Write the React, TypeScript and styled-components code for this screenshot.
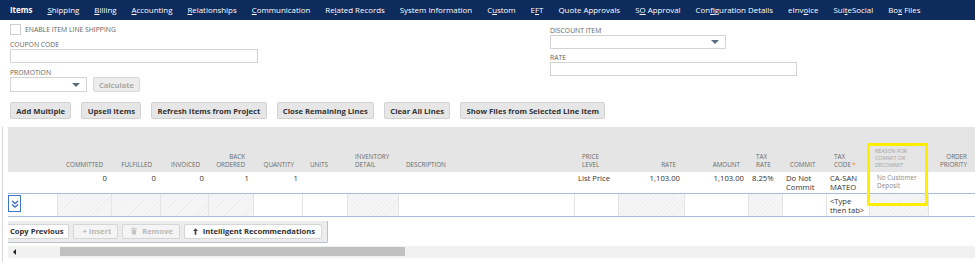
import styled, { createGlobalStyle } from 'styled-components';

const GlobalStyle = createGlobalStyle`
  html, body {
    margin: 0;
    padding: 0;
    background: #fff;
  }
  body {
    font-family: "Open Sans", "Liberation Sans", sans-serif;
    color: #333;
    width: 975px;
    overflow: hidden;
  }
`;

// top tabs
const TabBar = styled.div`
  height: 20px;
  background: #0d2b5c;
  display: flex;
  align-items: center;
  gap: 15px;
  padding-left: 10px;
`;

const Tab = styled.span<{ $active?: boolean }>`
  color: #fff;
  font-size: 7.9px;
  font-weight: ${p => (p.$active ? 700 : 400)};
  white-space: nowrap;
  u {
    text-decoration-thickness: 0.5px;
  }
`;

// form
const FormGrid = styled.div`
  display: grid;
  grid-template-columns: 540px 1fr;
  padding: 4px 0 0 10px;
`;

const FormCol = styled.div`
  display: flex;
  flex-direction: column;
`;

const CheckRow = styled.label`
  display: flex;
  align-items: center;
  gap: 4px;
  height: 10px;
`;

const CheckBox = styled.span`
  width: 9px;
  height: 9px;
  border: 1px solid #cfcfcf;
  background: #fff;
`;

const FieldLabel = styled.div<{ $gap?: number }>`
  font-size: 6.8px;
  line-height: 9px;
  color: #666;
  text-transform: uppercase;
  margin-top: ${p => p.$gap ?? 6}px;
  white-space: nowrap;
`;

const TextInput = styled.div<{ $w: number }>`
  width: ${p => p.$w}px;
  height: 14px;
  box-sizing: border-box;
  border: 1px solid #d3d3d3;
  background: #fff;
`;

const Select = styled.div<{ $w: number; $h?: number }>`
  width: ${p => p.$w}px;
  height: ${p => p.$h ?? 14}px;
  box-sizing: border-box;
  border: 1px solid #d3d3d3;
  background: #fff;
  display: flex;
  align-items: center;
  justify-content: flex-end;
  padding-right: 6px;
`;

const Caret = styled.span`
  width: 0;
  height: 0;
  border-left: 4px solid transparent;
  border-right: 4px solid transparent;
  border-top: 4px solid #5b6b80;
`;

const InlineRow = styled.div`
  display: flex;
  align-items: center;
  gap: 6px;
`;

const DisabledButton = styled.div`
  height: 15px;
  box-sizing: border-box;
  padding: 0 5px;
  display: flex;
  align-items: center;
  background: #ececec;
  border: 1px solid #d8d8d8;
  border-radius: 2px;
  color: #a8a8a8;
  font-size: 7.5px;
  font-weight: 700;
`;

// action buttons
const ActionRow = styled.div`
  display: flex;
  gap: 10px;
  padding-left: 10px;
  margin-top: 10px;
`;

const ActionButton = styled.div`
  height: 17px;
  box-sizing: border-box;
  padding: 0 5.3px;
  display: flex;
  align-items: center;
  background: #e6e6e6;
  border: 1px solid #d2d2d2;
  border-radius: 2px;
  color: #333;
  font-size: 7.65px;
  font-weight: 700;
  white-space: nowrap;
`;

// sublist
const Section = styled.div`
  margin: 8px 0 0 2px;
  border-left: 1px solid #d6d6d6;
  border-bottom: 1px solid #d6d6d6;
  padding: 0 0 4px 5px;
`;

const TableWrap = styled.div`
  position: relative;
  overflow: hidden;
`;

const Grid = styled.div<{ $cols: string }>`
  display: grid;
  grid-template-columns: ${p => p.$cols};
`;

const HeadCell = styled.div<{ $align: string; $faint?: boolean }>`
  height: 45px;
  box-sizing: border-box;
  background: #e5e5e5;
  display: flex;
  flex-direction: column;
  justify-content: flex-end;
  align-items: ${p => (p.$align === 'right' ? 'flex-end' : 'flex-start')};
  text-align: ${p => p.$align};
  padding: 0 ${p => (p.$faint ? 6 : 8)}px 3px;
  font-size: ${p => (p.$faint ? 5.3 : 6.3)}px;
  line-height: ${p => (p.$faint ? 7 : 8)}px;
  color: ${p => (p.$faint ? '#a3a3a3' : '#6a6a6a')};
  text-transform: uppercase;
  white-space: nowrap;
`;

const Req = styled.span`
  color: #e8962c;
  font-size: 7px;
  margin-left: 1px;
`;

const Cell = styled.div<{ $align: string; $faint?: boolean }>`
  height: 21px;
  box-sizing: border-box;
  padding: 2px 4px 0;
  text-align: ${p => p.$align};
  font-size: ${p => (p.$faint ? 6.4 : 7.7)}px;
  line-height: ${p => (p.$faint ? 8 : 9)}px;
  color: ${p => (p.$faint ? '#8a8a8a' : '#333')};
  padding-left: ${p => (p.$faint ? 8 : 4)}px;
`;

const EditRow = styled.div<{ $cols: string }>`
  display: grid;
  grid-template-columns: ${p => p.$cols};
  border-top: 1px solid #a9bbd8;
  border-bottom: 1px solid #a9bbd8;
  height: 24px;
  box-sizing: border-box;
`;

const EditCell = styled.div<{ $hatched?: boolean }>`
  border-left: 1px solid #e4e4e4;
  background: ${p =>
    p.$hatched
      ? 'repeating-linear-gradient(135deg, #f6f6f6 0 2px, #efefef 2px 3px)'
      : '#fff'};
  padding: 3px 3px 0;
  font-size: 7.6px;
  line-height: 9px;
  color: #333;
`;

const FirstEditCell = styled.div`
  display: flex;
  align-items: flex-start;
  padding-top: 1px;
  background: #fff;
`;

const ExpandBox = styled.div`
  width: 13px;
  height: 17px;
  box-sizing: border-box;
  border: 1px solid #3f74c9;
  display: flex;
  align-items: center;
  justify-content: center;
  background: #fff;
`;

const Highlight = styled.div`
  position: absolute;
  left: 859px;
  top: 16px;
  width: 61px;
  height: 63px;
  box-sizing: border-box;
  border: 3px solid #ffee00;
  pointer-events: none;
`;

const ButtonBar = styled.div`
  display: inline-flex;
  gap: 4px;
  padding: 3px 5px 3px 0;
  background: #ececec;
  border-right: 1px solid #b9c1cf;
  border-bottom: 1px solid #b9c1cf;
  border-radius: 0 0 2px 0;
`;

const BarButton = styled.div<{ $disabled?: boolean; $first?: boolean }>`
  height: 15px;
  box-sizing: border-box;
  padding: 0 ${p => (p.$first ? 5 : 6)}px 0 ${p => (p.$first ? 2 : 8)}px;
  display: flex;
  align-items: center;
  gap: 5px;
  background: ${p => (p.$disabled ? '#f4f4f4' : '#fdfdfd')};
  border: 1px solid #d6d6d6;
  border-left-width: ${p => (p.$first ? 0 : 1)}px;
  border-radius: ${p => (p.$first ? '0 2px 2px 0' : '2px')};
  font-size: 7.6px;
  font-weight: 700;
  color: ${p => (p.$disabled ? '#b8b8b8' : '#333')};
  white-space: nowrap;
`;

const ScrollTrack = styled.div`
  margin-top: 3px;
  height: 12px;
  background: #f1f1f1;
  display: flex;
  align-items: center;
`;

const ScrollArrow = styled.span`
  width: 0;
  height: 0;
  margin-left: 5px;
  border-top: 3px solid transparent;
  border-bottom: 3px solid transparent;
  border-right: 3px solid #222;
`;

const ScrollThumb = styled.div`
  margin-left: 44px;
  width: 345px;
  height: 9px;
  background: #c1c1c1;
`;

type Col = {
  w: number;
  head: string[];
  align: 'left' | 'right';
  hatched?: boolean;
  faint?: boolean;
  req?: boolean;
  value?: string[];
  edit?: string[];
};

const columns: Col[] = [
  { w: 49, head: [], align: 'left' },
  { w: 54, head: ['Committed'], align: 'right', hatched: true, value: ['0'] },
  { w: 49, head: ['Fulfilled'], align: 'right', hatched: true, value: ['0'] },
  { w: 48, head: ['Invoiced'], align: 'right', hatched: true, value: ['0'] },
  { w: 45, head: ['Back', 'Ordered'], align: 'right', hatched: true, value: ['1'] },
  { w: 49, head: ['Quantity'], align: 'right', value: ['1'] },
  { w: 45, head: ['Units'], align: 'left' },
  { w: 51, head: ['Inventory', 'Detail'], align: 'left', hatched: true },
  { w: 176, head: ['Description'], align: 'left' },
  { w: 44, head: ['Price', 'Level'], align: 'left', value: ['List Price'] },
  { w: 66, head: ['Rate'], align: 'right', hatched: true, value: ['1,103.00'] },
  { w: 64, head: ['Amount'], align: 'right', value: ['1,103.00'] },
  { w: 34, head: ['Tax', 'Rate'], align: 'left', hatched: true, value: ['8.25%'] },
  { w: 44, head: ['Commit'], align: 'left', value: ['Do Not', 'Commit'] },
  { w: 43, head: ['Tax', 'Code'], align: 'left', req: true, value: ['CA-SAN', 'MATEO'], edit: ['<Type', 'then tab>'] },
  { w: 59, head: ['Reason for', 'Commit or', 'Decommit'], align: 'left', faint: true, hatched: true, value: ['No Customer', 'Deposit'] },
  { w: 47, head: ['Order', 'Priority'], align: 'right' },
];

const template = columns.map(c => `${c.w}px`).join(' ');

const tabs: { label: string; u?: number; active?: boolean }[] = [
  { label: 'Items', active: true },
  { label: 'Shipping', u: 0 },
  { label: 'Billing', u: 0 },
  { label: 'Accounting', u: 0 },
  { label: 'Relationships', u: 0 },
  { label: 'Communication', u: 0 },
  { label: 'Related Records', u: 2 },
  { label: 'System Information' },
  { label: 'Custom', u: 1 },
  { label: 'EFT', u: 1 },
  { label: 'Quote Approvals' },
  { label: 'SO Approval', u: 1 },
  { label: 'Configuration Details', u: 3 },
  { label: 'eInvoice', u: 4 },
  { label: 'SuiteSocial', u: 3 },
  { label: 'Box Files', u: 2 },
];

function TabLabel({ label, u }: { label: string; u?: number }) {
  if (u === undefined) return <>{label}</>;
  return (
    <>
      {label.slice(0, u)}
      <u>{label[u]}</u>
      {label.slice(u + 1)}
    </>
  );
}

function Lines({ lines }: { lines?: string[] }) {
  if (!lines) return null;
  return (
    <>
      {lines.map((l, i) => (
        <div key={i}>{l}</div>
      ))}
    </>
  );
}

const DoubleChevron = () => (
  <svg width="8" height="8" viewBox="0 0 8 8">
    <path d="M1 1 L4 3.5 L7 1" fill="none" stroke="#3f74c9" strokeWidth="1.4" />
    <path d="M1 4.5 L4 7 L7 4.5" fill="none" stroke="#3f74c9" strokeWidth="1.4" />
  </svg>
);

const TrashIcon = () => (
  <svg width="6" height="8" viewBox="0 0 7 8">
    <rect x="0" y="0.8" width="7" height="1.2" fill="#c4c4c4" />
    <rect x="2.5" y="0" width="2" height="1" fill="#c4c4c4" />
    <path d="M0.8 2.4 H6.2 L5.7 8 H1.3 Z" fill="#c4c4c4" />
  </svg>
);

const UpArrow = () => (
  <svg width="5" height="7" viewBox="0 0 6 8">
    <path d="M3 0 L6 3.5 H4 V8 H2 V3.5 H0 Z" fill="#444" />
  </svg>
);

export default function App() {
  return (
    <>
      <GlobalStyle />
      <TabBar>
        {tabs.map(t => (
          <Tab key={t.label} $active={t.active}>
            <TabLabel label={t.label} u={t.u} />
          </Tab>
        ))}
      </TabBar>

      <FormGrid>
        <FormCol>
          <CheckRow>
            <CheckBox />
            <FieldLabel $gap={0}>Enable Item Line Shipping</FieldLabel>
          </CheckRow>
          <FieldLabel>Coupon Code</FieldLabel>
          <TextInput $w={248} />
          <FieldLabel $gap={5}>Promotion</FieldLabel>
          <InlineRow>
            <Select $w={77} $h={15}>
              <Caret />
            </Select>
            <DisabledButton>Calculate</DisabledButton>
          </InlineRow>
        </FormCol>
        <FormCol>
          <FieldLabel $gap={2}>Discount Item</FieldLabel>
          <Select $w={176}>
            <Caret />
          </Select>
          <FieldLabel $gap={4}>Rate</FieldLabel>
          <TextInput $w={247} />
        </FormCol>
      </FormGrid>

      <ActionRow>
        <ActionButton>Add Multiple</ActionButton>
        <ActionButton>Upsell Items</ActionButton>
        <ActionButton>Refresh Items from Project</ActionButton>
        <ActionButton>Close Remaining Lines</ActionButton>
        <ActionButton>Clear All Lines</ActionButton>
        <ActionButton>Show Files from Selected Line Item</ActionButton>
      </ActionRow>

      <Section>
        <TableWrap>
          <Grid $cols={template}>
            {columns.map((c, i) => (
              <HeadCell key={i} $align={c.align} $faint={c.faint}>
                {c.head.map((h, j) => (
                  <div key={j}>
                    {h}
                    {c.req && j === c.head.length - 1 && <Req>*</Req>}
                  </div>
                ))}
              </HeadCell>
            ))}
            {columns.map((c, i) => (
              <Cell key={i} $align={c.align} $faint={c.faint}>
                <Lines lines={c.value} />
              </Cell>
            ))}
          </Grid>
          <EditRow $cols={template}>
            {columns.map((c, i) =>
              i === 0 ? (
                <FirstEditCell key={i}>
                  <ExpandBox>
                    <DoubleChevron />
                  </ExpandBox>
                </FirstEditCell>
              ) : (
                <EditCell key={i} $hatched={c.hatched}>
                  <Lines lines={c.edit} />
                </EditCell>
              )
            )}
          </EditRow>
          <Highlight />
        </TableWrap>

        <ButtonBar>
          <BarButton $first>Copy Previous</BarButton>
          <BarButton $disabled>+ Insert</BarButton>
          <BarButton $disabled>
            <TrashIcon />
            Remove
          </BarButton>
          <BarButton>
            <UpArrow />
            Intelligent Recommendations
          </BarButton>
        </ButtonBar>

        <ScrollTrack>
          <ScrollArrow />
          <ScrollThumb />
        </ScrollTrack>
      </Section>
    </>
  );
}
